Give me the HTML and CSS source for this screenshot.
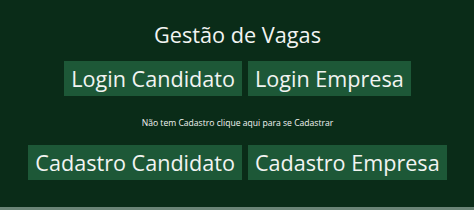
FILE: index.html
```html
<!DOCTYPE html>
<html lang="pt-BR">
<head>
<meta charset="utf-8">
<title>Gestão de Vagas</title>
<link rel="stylesheet" href="styles.css">
</head>
<body>
<main class="page">
  <h1 class="title">Gestão de Vagas</h1>
  <div class="row row-login">
    <a class="btn" href="#">Login Candidato</a>
    <a class="btn" href="#">Login Empresa</a>
  </div>
  <p class="hint">Não tem Cadastro clique aqui para se Cadastrar</p>
  <div class="row row-cadastro">
    <a class="btn" href="#">Cadastro Candidato</a>
    <a class="btn" href="#">Cadastro Empresa</a>
  </div>
</main>
<div class="bottom-strip"></div>
</body>
</html>
```

FILE: styles.css
```css
html, body {
  margin: 0;
  padding: 0;
}
body {
  width: 474px;
  height: 210px;
  background: #0a2c18;
  font-family: "Open Sans", "Noto Sans", sans-serif;
  color: #f2f4f2;
  display: flex;
  flex-direction: column;
  overflow: hidden;
}
.page {
  flex: 1;
  display: flex;
  flex-direction: column;
  align-items: center;
  padding-left: 1px;
}
.title {
  margin: 20px 0 0;
  font-size: 21.7px;
  font-weight: 400;
  line-height: 30px;
}
.row {
  display: flex;
  gap: 6px;
}
.row-login {
  margin-top: 11px;
}
.row-cadastro {
  margin-top: 16px;
}
.btn {
  display: block;
  background: #1d5837;
  color: #f2f4f2;
  text-decoration: none;
  font-size: 21.6px;
  line-height: 30px;
  padding: 3px 7px 2px;
}
.hint {
  margin: 21px 0 0;
  font-size: 8.6px;
  line-height: 12px;
}
.bottom-strip {
  height: 3px;
  background: #6b8577;
}
```
